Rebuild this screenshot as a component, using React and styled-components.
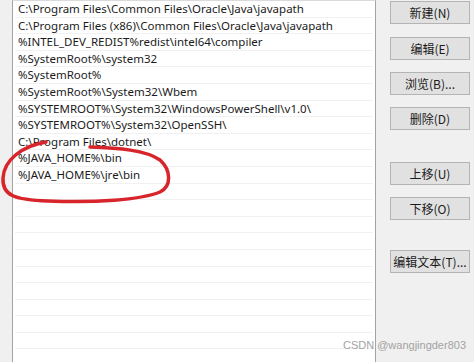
import React from "react";
import styled, { createGlobalStyle } from "styled-components";

const GlobalStyle = createGlobalStyle`
  html, body {
    margin: 0;
    padding: 0;
    background: #f0f0f0;
  }
  body {
    font-family: "Noto Sans", "Noto Sans CJK SC", sans-serif;
  }
`;

const Dialog = styled.div`
  position: relative;
  display: flex;
  width: 474px;
  height: 362px;
  overflow: hidden;
  background: #f0f0f0;
`;

const Gutter = styled.div`
  width: 12px;
  flex-shrink: 0;
`;

const ListBox = styled.div`
  width: 364px;
  flex-shrink: 0;
  background: #fff;
  border-left: 1px solid #a3a3a3;
  border-right: 1px solid #a3a3a3;
  border-top: 1px solid #dadada;
  box-sizing: border-box;
  padding: 0 2px;
`;

const Row = styled.div`
  height: 16.6px;
  box-sizing: border-box;
  border-bottom: 1px solid #f1f1f1;
  padding-left: 3px;
  font-size: 11.5px;
  line-height: 16px;
  color: #1b1b1b;
  white-space: nowrap;
  overflow: hidden;
`;

const Side = styled.div`
  display: flex;
  flex-direction: column;
  padding-left: 14px;
`;

const Button = styled.div`
  width: 80px;
  height: 23px;
  margin-top: ${(p) => p.$top}px;
  box-sizing: border-box;
  background: #e1e1e1;
  border: 1px solid #b4b4b4;
  display: flex;
  align-items: center;
  justify-content: center;
  font-family: "Noto Sans CJK SC", "Noto Sans", sans-serif;
  font-size: 12px;
  color: #1a1a1a;
`;

const Mark = styled.svg`
  position: absolute;
  left: 0;
  top: 0;
  pointer-events: none;
`;

const Watermark = styled.div`
  position: absolute;
  right: 8px;
  bottom: 11px;
  font-family: "Liberation Sans", Arial, sans-serif;
  font-size: 11px;
  color: #a2a2a2;
`;

const paths = [
  "C:\\Program Files\\Common Files\\Oracle\\Java\\javapath",
  "C:\\Program Files (x86)\\Common Files\\Oracle\\Java\\javapath",
  "%INTEL_DEV_REDIST%redist\\intel64\\compiler",
  "%SystemRoot%\\system32",
  "%SystemRoot%",
  "%SystemRoot%\\System32\\Wbem",
  "%SYSTEMROOT%\\System32\\WindowsPowerShell\\v1.0\\",
  "%SYSTEMROOT%\\System32\\OpenSSH\\",
  "C:\\Program Files\\dotnet\\",
  "%JAVA_HOME%\\bin",
  "%JAVA_HOME%\\jre\\bin",
];

const rows = [...paths, ...Array(11).fill("")];

const buttons = [
  { label: "新建(N)", top: 1 },
  { label: "编辑(E)", top: 13 },
  { label: "浏览(B)...", top: 12 },
  { label: "删除(D)", top: 12 },
  { label: "上移(U)", top: 32 },
  { label: "下移(O)", top: 12 },
  { label: "编辑文本(T)...", top: 30 },
];

export default function App() {
  return (
    <>
      <GlobalStyle />
      <Dialog>
        <Gutter />
        <ListBox>
          {rows.map((text, i) => (
            <Row key={i}>{text}</Row>
          ))}
        </ListBox>
        <Side>
          {buttons.map((b) => (
            <Button key={b.label} $top={b.top}>
              {b.label}
            </Button>
          ))}
        </Side>
        <Mark width="474" height="362" viewBox="0 0 474 362">
          <path
            d="M46 142 C22 146 4 160 3 178 C2 195 14 200 48 201 C95 203 140 200 160 192 C172 186 171 170 160 160 C146 150 118 148 90 147"
            fill="none"
            stroke="#d8242b"
            strokeWidth="3.5"
            strokeLinecap="round"
          />
        </Mark>
        <Watermark>CSDN @wangjingder803</Watermark>
      </Dialog>
    </>
  );
}
